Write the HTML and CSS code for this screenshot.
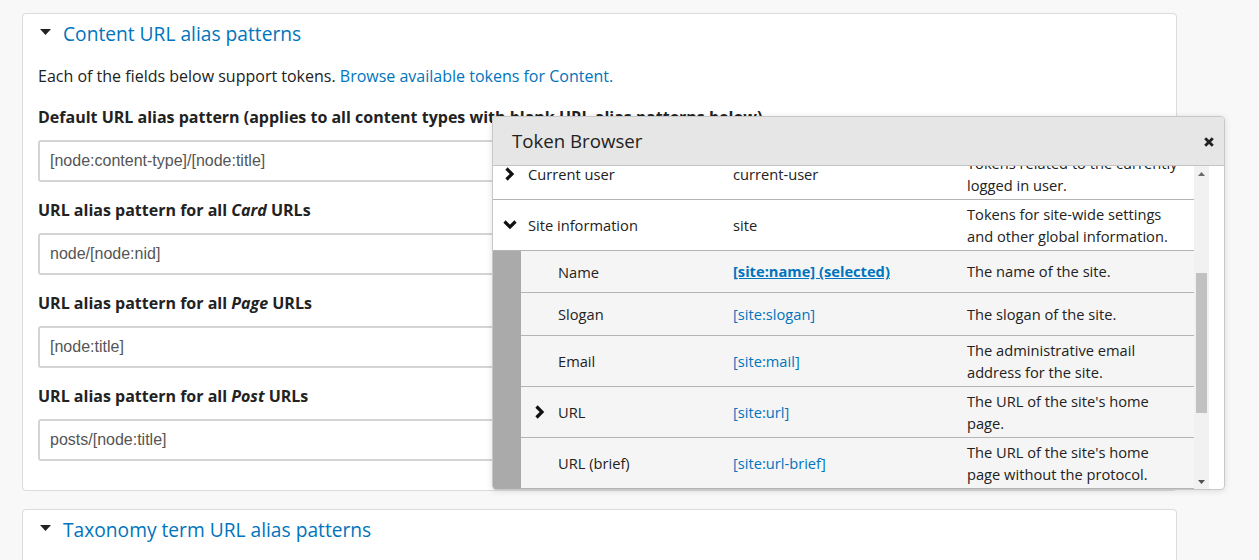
FILE: index.html
```html
<!DOCTYPE html>
<html lang="en">
<head>
<meta charset="utf-8">
<title>URL alias patterns</title>
<link rel="stylesheet" href="styles.css">
</head>
<body>
<div class="page">
  <section class="panel">
    <div class="summary">
      <svg class="summary-arrow" width="11" height="6" viewBox="0 0 11 6"><path d="M0 0h11L5.5 6z" fill="#222"/></svg>
      <span>Content URL alias patterns</span>
    </div>
    <div class="panel-body">
      <p class="desc">Each of the fields below support tokens. <a class="link" href="#">Browse available tokens for Content.</a></p>
      <div class="field">
        <label class="field-label">Default URL alias pattern (applies to all content types with blank URL alias patterns below)</label>
        <input class="input" type="text" value="[node:content-type]/[node:title]">
      </div>
      <div class="field">
        <label class="field-label">URL alias pattern for all <em>Card</em> URLs</label>
        <input class="input" type="text" value="node/[node:nid]">
      </div>
      <div class="field">
        <label class="field-label">URL alias pattern for all <em>Page</em> URLs</label>
        <input class="input" type="text" value="[node:title]">
      </div>
      <div class="field">
        <label class="field-label">URL alias pattern for all <em>Post</em> URLs</label>
        <input class="input" type="text" value="posts/[node:title]">
      </div>
    </div>
  </section>

  <section class="panel panel-next">
    <div class="summary">
      <svg class="summary-arrow" width="11" height="6" viewBox="0 0 11 6"><path d="M0 0h11L5.5 6z" fill="#222"/></svg>
      <span>Taxonomy term URL alias patterns</span>
    </div>
    <div class="panel-body">
      <p class="desc">Each of the fields below support tokens. <a class="link" href="#">Browse available tokens for Taxonomy terms.</a></p>
    </div>
  </section>

  <div class="dialog" role="dialog">
    <div class="dialog-head">
      <span class="dialog-title">Token Browser</span>
      <svg class="dialog-close" width="10" height="10" viewBox="0 0 10 10"><path d="M1.2 1.2l7.6 7.6M8.8 1.2l-7.6 7.6" stroke="#222" stroke-width="2.8" fill="none"/></svg>
    </div>
    <div class="dialog-body">
      <div class="tb-scroll">
        <table class="tb">
          <colgroup><col class="c1"><col class="c2"><col class="c3"></colgroup>
          <thead>
            <tr><th class="first">Name</th><th>Token</th><th>Description</th></tr>
          </thead>
          <tbody>
            <tr>
              <td class="first"><div class="name"><span class="exp"><svg width="12" height="14" viewBox="0 0 12 14"><path d="M2.5 1.5l5.5 5.5-5.5 5.5" fill="none" stroke="#111" stroke-width="3.2"/></svg></span>Comments</div></td>
              <td>comment</td>
              <td>Tokens for comments posted on a node.</td>
            </tr>
            <tr>
              <td class="first"><div class="name"><span class="exp"><svg width="12" height="14" viewBox="0 0 12 14"><path d="M2.5 1.5l5.5 5.5-5.5 5.5" fill="none" stroke="#111" stroke-width="3.2"/></svg></span>Content</div></td>
              <td>node</td>
              <td>Tokens related to individual content items, or "nodes".</td>
            </tr>
            <tr>
              <td class="first"><div class="name"><span class="exp"><svg width="12" height="14" viewBox="0 0 12 14"><path d="M2.5 1.5l5.5 5.5-5.5 5.5" fill="none" stroke="#111" stroke-width="3.2"/></svg></span>Current date</div></td>
              <td>current-date</td>
              <td>Tokens related to the current date and time.</td>
            </tr>
            <tr class="tb-row-current">
              <td class="first"><div class="name"><span class="exp"><svg width="12" height="14" viewBox="0 0 12 14"><path d="M2.5 1.5l5.5 5.5-5.5 5.5" fill="none" stroke="#111" stroke-width="3.2"/></svg></span>Current user</div></td>
              <td>current-user</td>
              <td>Tokens related to the currently logged in user.</td>
            </tr>
            <tr>
              <td class="first"><div class="name"><span class="exp"><svg width="14" height="12" viewBox="0 0 14 12"><path d="M1.5 2.5l5.5 5.5 5.5-5.5" fill="none" stroke="#111" stroke-width="3.2"/></svg></span>Site information</div></td>
              <td>site</td>
              <td>Tokens for site-wide settings and other global information.</td>
            </tr>
            <tr class="child">
              <td class="first"><div class="name"><span class="exp"></span>Name</div></td>
              <td><a class="token token-selected" href="#">[site:name] (selected)</a></td>
              <td>The name of the site.</td>
            </tr>
            <tr class="child">
              <td class="first"><div class="name"><span class="exp"></span>Slogan</div></td>
              <td><a class="token" href="#">[site:slogan]</a></td>
              <td>The slogan of the site.</td>
            </tr>
            <tr class="child">
              <td class="first"><div class="name"><span class="exp"></span>Email</div></td>
              <td><a class="token" href="#">[site:mail]</a></td>
              <td>The administrative email address for the site.</td>
            </tr>
            <tr class="child">
              <td class="first"><div class="name"><span class="exp"><svg width="12" height="14" viewBox="0 0 12 14"><path d="M2.5 1.5l5.5 5.5-5.5 5.5" fill="none" stroke="#111" stroke-width="3.2"/></svg></span>URL</div></td>
              <td><a class="token" href="#">[site:url]</a></td>
              <td>The URL of the site's home page.</td>
            </tr>
            <tr class="child">
              <td class="first"><div class="name"><span class="exp"></span>URL (brief)</div></td>
              <td><a class="token" href="#">[site:url-brief]</a></td>
              <td>The URL of the site's home page without the protocol.</td>
            </tr>
            <tr class="child">
              <td class="first"><div class="name"><span class="exp"></span>Login page</div></td>
              <td><a class="token" href="#">[site:login-url]</a></td>
              <td>The URL of the site's login page.</td>
            </tr>
            <tr>
              <td class="first"><div class="name"><span class="exp"><svg width="12" height="14" viewBox="0 0 12 14"><path d="M2.5 1.5l5.5 5.5-5.5 5.5" fill="none" stroke="#111" stroke-width="3.2"/></svg></span>Taxonomy terms</div></td>
              <td>term</td>
              <td>Tokens related to taxonomy terms.</td>
            </tr>
            <tr>
              <td class="first"><div class="name"><span class="exp"><svg width="12" height="14" viewBox="0 0 12 14"><path d="M2.5 1.5l5.5 5.5-5.5 5.5" fill="none" stroke="#111" stroke-width="3.2"/></svg></span>Users</div></td>
              <td>user</td>
              <td>Tokens related to individual user accounts.</td>
            </tr>
          </tbody>
        </table>
      </div>
      <div class="scrollbar" aria-hidden="true">
        <div class="sb-btn"><svg width="7" height="4" viewBox="0 0 7 4"><path d="M0 4L3.5 0 7 4z" fill="#6a6a6a"/></svg></div>
        <div class="sb-thumb"></div>
        <div class="sb-btn sb-btn-down"><svg width="7" height="4" viewBox="0 0 7 4"><path d="M0 0h7L3.5 4z" fill="#505050"/></svg></div>
      </div>
    </div>
  </div>
</div>
<script src="script.js"></script>
</body>
</html>
```

FILE: styles.css
```css
* { box-sizing: border-box; }

html, body {
  margin: 0;
  height: 100%;
}

body {
  background: #f8f8f8;
  color: #222;
  font-family: "Open Sans", "Noto Sans", sans-serif;
  font-size: 16px;
}

.page {
  position: relative;
  height: 100vh;
  overflow: hidden;
  padding: 13px 0 0 22px;
}

.panel {
  width: 1155px;
  background: #fff;
  border: 1px solid #dcdcdc;
  border-radius: 4px;
  box-shadow: 0 0 1px rgba(0, 0, 0, 0.06);
}

.panel-next {
  margin-top: 18px;
}

.summary {
  display: flex;
  align-items: center;
  padding: 5px 0 0 17px;
  font-size: 19.2px;
  line-height: 30px;
  color: #0074bd;
}

.summary-arrow {
  margin-right: 12px;
  margin-bottom: 4px;
  flex: none;
}

.panel-body {
  padding: 16px 15px 29px;
}

.desc {
  margin: 0;
  line-height: 22px;
}

.link {
  color: #0074bd;
  text-decoration: none;
}

.field {
  margin-top: 17px;
}

.desc + .field {
  margin-top: 19px;
}

.field-label {
  display: block;
  font-weight: 700;
  line-height: 22px;
  margin-bottom: 12px;
  white-space: nowrap;
}

.input {
  display: block;
  width: 100%;
  height: 42px;
  border: 2px solid #d4d4d4;
  border-radius: 3px;
  padding: 0 10px;
  font: 16px "Liberation Sans", Arial, sans-serif;
  color: #555;
  background: #fff;
}

/* Token browser dialog */
.dialog {
  position: absolute;
  left: 492px;
  top: 116px;
  width: 733px;
  background: #fff;
  border: 1px solid #c8c8c8;
  border-radius: 4px;
  box-shadow: 0 1px 6px rgba(0, 0, 0, 0.12);
  overflow: hidden;
}

.dialog-head {
  display: flex;
  align-items: center;
  justify-content: space-between;
  height: 49px;
  padding: 0 10px 0 19px;
  background: #e6e6e6;
  border-bottom: 1px solid #c4c4c4;
}

.dialog-title {
  font-size: 18.67px;
  line-height: 28px;
  color: #222;
  margin-top: -1px;
}

.dialog-close {
  flex: none;
  margin-top: 1px;
}

.dialog-body {
  display: flex;
  height: 323px;
  padding-right: 15px;
}

.tb-scroll {
  flex: 1;
  min-width: 0;
  overflow: hidden;
}

.tb {
  width: 701px;
  table-layout: fixed;
  border-collapse: separate;
  border-spacing: 0;
  font-size: 14.67px;
  line-height: 22px;
  color: #222;
}

.tb .c1 { width: 234px; }
.tb .c2 { width: 234px; }
.tb .c3 { width: 233px; }

.tb tr { height: 42.5px; }

.tb th {
  text-align: left;
  font-weight: 700;
  padding: 8px 15px 8px 6px;
  border-bottom: 1px solid #b4b4b4;
}

.tb td {
  padding: 3px 15px 3px 6px;
  border-bottom: 1px solid #b4b4b4;
  vertical-align: middle;
}

.tb .first {
  padding-left: 7px;
}

.name {
  display: flex;
  align-items: center;
}

.exp {
  flex: none;
  display: flex;
  align-items: center;
  justify-content: center;
  width: 20px;
  height: 22px;
  margin-right: 8px;
}

.tb tr.child td {
  background: #f5f5f5;
}

.tb tr.child td.first {
  padding-left: 37px;
  border-bottom: 0;
  background:
    linear-gradient(#aaa, #aaa) left top / 28px 100% no-repeat,
    linear-gradient(#b4b4b4, #b4b4b4) left bottom / 100% 1px no-repeat,
    #f5f5f5;
}

.token {
  color: #0074bd;
  text-decoration: none;
}

.token-selected {
  font-weight: 700;
  text-decoration: underline;
}

/* scrollbar */
.scrollbar {
  flex: none;
  width: 15px;
  display: flex;
  flex-direction: column;
  background: #f1f1f1;
}

.sb-btn {
  flex: none;
  height: 15px;
  display: flex;
  align-items: center;
  justify-content: center;
}

.sb-thumb {
  flex: none;
  height: 140px;
  margin: 92px 2px 0;
  background: #c1c1c1;
}

.sb-btn-down {
  margin-top: auto;
}
```

FILE: script.js
```js
(function () {
  var scroller = document.querySelector('.tb-scroll');
  var row = document.querySelector('.tb-row-current');
  if (!scroller || !row) return;
  var offset = row.getBoundingClientRect().top - scroller.getBoundingClientRect().top;
  scroller.scrollTop = offset + 17;
})();
```
